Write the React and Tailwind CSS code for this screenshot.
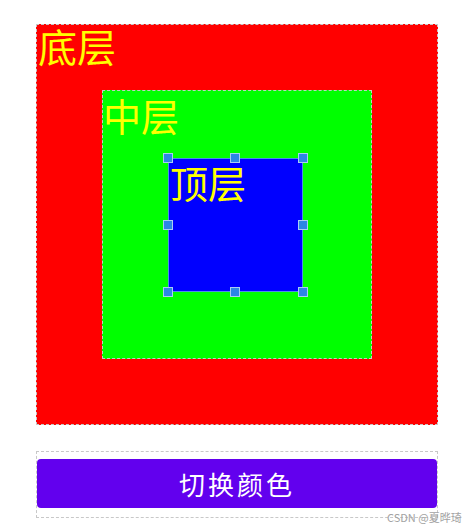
import React, { useState } from "react";

const CJK = "font-['Noto_Sans_CJK_SC','Noto_Sans',sans-serif]";

// Small square handle shown on the selected layer
function Handle({ className }) {
  return (
    <span
      className={`absolute w-[10px] h-[10px] bg-[#2d86e6] border border-[#a9cdf3] ${className}`}
    />
  );
}

export default function App() {
  const [swapped, setSwapped] = useState(false);
  const bottom = swapped ? "bg-[#0000ff]" : "bg-[#ff0000]";
  const top = swapped ? "bg-[#ff0000]" : "bg-[#0000ff]";

  return (
    <div
      className={`relative w-[474px] h-[531px] bg-white flex flex-col items-center pt-[24px] ${CJK}`}
    >
      {/* bottom layer */}
      <div
        className={`grid w-[402px] h-[401px] border border-dashed border-[#c8c8c8] ${bottom}`}
      >
        <span className="col-start-1 row-start-1 self-start justify-self-start text-[39px] leading-none text-[#ffff00] ml-[1px] mt-[1px]">
          底层
        </span>

        {/* middle layer */}
        <div className="col-start-1 row-start-1 place-self-center grid w-[270px] h-[269px] border border-dashed border-[#c8c8c8] bg-[#00ff00]">
          <span className="col-start-1 row-start-1 self-start justify-self-start text-[38px] leading-none text-[#ffff00] mt-[5px]">
            中层
          </span>

          {/* top layer, selected */}
          <div
            className={`relative col-start-1 row-start-1 place-self-center mr-[3px] w-[135px] h-[134px] border border-[#4a8fe6] ${top}`}
          >
            <span className="block text-[38px] leading-none text-[#ffff00] ml-[1px] mt-[4px]">
              顶层
            </span>
            <Handle className="-left-[6px] -top-[6px]" />
            <Handle className="left-[61px] -top-[6px]" />
            <Handle className="-right-[6px] -top-[6px]" />
            <Handle className="-left-[6px] top-[61px]" />
            <Handle className="-right-[6px] top-[61px]" />
            <Handle className="-left-[6px] -bottom-[6px]" />
            <Handle className="left-[61px] -bottom-[6px]" />
            <Handle className="-right-[6px] -bottom-[6px]" />
          </div>
        </div>
      </div>

      {/* action button */}
      <div className="mt-[26px] w-[402px] h-[67px] border border-dashed border-[#c8c8c8] pt-[7px]">
        <button
          onClick={() => setSwapped((s) => !s)}
          className="w-[400px] h-[49px] rounded-[4px] bg-[#6200ee] text-white text-[26px] leading-none tracking-[3px] flex items-center justify-center"
        >
          切换颜色
        </button>
      </div>

      <span className="absolute left-[387px] top-[512px] text-[11px] leading-none text-[#a3a3a3]">
        CSDN @夏晔琦
      </span>
    </div>
  );
}
